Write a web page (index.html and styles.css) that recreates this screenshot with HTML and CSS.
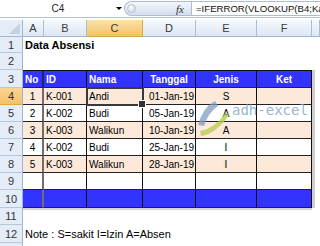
FILE: index.html
```html
<!DOCTYPE html>
<html>
<head>
<meta charset="utf-8">
<link rel="stylesheet" href="styles.css">
</head>
<body>
<div class="app">
  <div class="fbar">
    <div class="namebox"><span class="ref">C4</span><span class="dd"></span></div>
    <div class="pill"><span class="knob"></span><span class="fx">fx</span></div>
    <div class="formula">=IFERROR(VLOOKUP(B4;Ka</div>
  </div>
  <div class="sheet">
    <div class="row hdr">
      <div class="corner"><span class="tri"></span></div>
      <div class="ch">A</div><div class="ch">B</div><div class="ch on">C</div><div class="ch">D</div><div class="ch">E</div><div class="ch">F</div><div class="ch"></div>
    </div>
    <div class="row h16"><div class="rh">1</div><div class="c span title">Data Absensi</div></div>
    <div class="row"><div class="rh">2</div><div class="c span"></div></div>
    <div class="row h18 head">
      <div class="rh">3</div>
      <div class="t a">No</div><div class="t">ID</div><div class="t">Nama</div><div class="t ctr">Tanggal</div><div class="t ctr">Jenis</div><div class="t ctr last">Ket</div><div class="sh"></div>
    </div>
    <div class="row peach">
      <div class="rh on">4</div>
      <div class="t a ctr">1</div><div class="t">K-001</div><div class="t sel">Andi</div><div class="t rt">01-Jan-19</div><div class="t ctr">S</div><div class="t last"></div><div class="sh"></div>
    </div>
    <div class="row">
      <div class="rh">5</div>
      <div class="t a ctr">2</div><div class="t">K-002</div><div class="t">Budi</div><div class="t rt">05-Jan-19</div><div class="t ctr">A</div><div class="t last"></div><div class="sh"></div>
    </div>
    <div class="row peach">
      <div class="rh">6</div>
      <div class="t a ctr">3</div><div class="t">K-003</div><div class="t">Walikun</div><div class="t rt">10-Jan-19</div><div class="t ctr">A</div><div class="t last"></div><div class="sh"></div>
    </div>
    <div class="row">
      <div class="rh">7</div>
      <div class="t a ctr">4</div><div class="t">K-002</div><div class="t">Budi</div><div class="t rt">25-Jan-19</div><div class="t ctr">I</div><div class="t last"></div><div class="sh"></div>
    </div>
    <div class="row peach">
      <div class="rh">8</div>
      <div class="t a ctr">5</div><div class="t">K-003</div><div class="t">Walikun</div><div class="t rt">28-Jan-19</div><div class="t ctr">I</div><div class="t last"></div><div class="sh"></div>
    </div>
    <div class="row">
      <div class="rh">9</div>
      <div class="t a"></div><div class="t"></div><div class="t"></div><div class="t"></div><div class="t"></div><div class="t last"></div><div class="sh"></div>
    </div>
    <div class="row h18 foot">
      <div class="rh">10</div>
      <div class="t a"></div><div class="t"></div><div class="t"></div><div class="t"></div><div class="t"></div><div class="t last"></div><div class="sh"></div>
    </div>
    <div class="row"><div class="rh">11</div><div class="c span"></div></div>
    <div class="row h18"><div class="rh">12</div><div class="c span note">Note : S=sakit I=Izin A=Absen</div></div>
    <div class="row"><div class="rh"></div><div class="c span"></div></div>
  </div>
  <div class="wm">
    <svg class="logo" width="40" height="40" viewBox="0 0 40 40">
      <path d="M19 2 Q7 8 2 26 L8 27 Q12 14 22 7 Z" fill="#7f9cc0" opacity="0.75"/>
      <path d="M5 37 Q20 35 34 15 L29 14 Q20 29 4 32 Z" fill="#b3c948" opacity="0.75"/>
    </svg>
    <span class="wmtext">adh-excel</span>
  </div>
</div>
</body>
</html>
```
FILE: styles.css
```css
* { box-sizing: border-box; }
html, body { margin: 0; padding: 0; background: #fff; }
.app { position: relative; width: 320px; height: 246px; overflow: hidden; font-family: "Liberation Sans", Arial, sans-serif; color: #000; }

.fbar { display: flex; height: 18px; border-bottom: 1px solid #b4c6dc; margin-bottom: 2px; font-size: 10px; }
.namebox { width: 124px; display: flex; align-items: center; }
.ref { width: 116px; text-align: center; color: #222; }
.dd { width: 0; height: 0; border-left: 3px solid transparent; border-right: 3px solid transparent; border-top: 3px solid #000; }
.pill { width: 67px; margin-top: 1px; height: 15px; border: 1px solid #a9bdd6; border-right: 0; border-radius: 8px 0 0 8px; background: linear-gradient(#f4f7fb, #d3deec); display: flex; align-items: center; justify-content: space-between; padding: 0 7px 0 2px; }
.knob { width: 9px; height: 9px; border-radius: 50%; background: radial-gradient(circle at 40% 35%, #ffffff, #c2cfdf); border: 1px solid #b3c2d6; }
.fx { font-family: "Liberation Serif", serif; font-style: italic; font-size: 11px; color: #333; }
.formula { flex: 1; margin-top: 1px; height: 15px; border: 1px solid #a9bdd6; border-right: 0; padding-left: 4px; white-space: nowrap; overflow: hidden; line-height: 13px; font-size: 9.6px; color: #111; }

.sheet { display: flex; flex-direction: column; }
.row { display: grid; grid-template-columns: 23px 21px 43px 56px 53px 61px 55px 1fr; height: 17px; font-size: 10px; }
.row.h16 { height: 16px; }
.row.h18 { height: 18px; }

.corner { background: #e4ecf7; border-right: 1px solid #9eb6ce; border-bottom: 1px solid #9eb6ce; display: flex; justify-content: flex-end; align-items: flex-end; padding: 0 2px 2px 0; }
.tri { width: 11px; height: 11px; background: #c3d1e2; clip-path: polygon(100% 0, 100% 100%, 0 100%); }
.ch { background: linear-gradient(#f6f9fd, #dce6f3); border-right: 1px solid #a9bdd4; border-bottom: 1px solid #9eb6ce; text-align: center; line-height: 16px; font-size: 11px; color: #3a3a3a; }
.ch.on { background: linear-gradient(#fbe0ab, #f3c365); border-color: #e1a84a; }

.rh { background: #e4ecf7; border-right: 1px solid #9eb6ce; border-bottom: 1px solid #b5c7dc; display: flex; align-items: center; justify-content: center; font-size: 11px; color: #333; }
.rh.on { background: linear-gradient(#f9d494, #f5c16b); border-bottom-color: #e1a84a; }

.c { display: flex; align-items: center; padding-left: 2px; white-space: nowrap; }
.span { grid-column: 2 / -1; }
.title { font-weight: bold; font-size: 11px; }
.note { font-size: 11px; }

.t { display: flex; align-items: center; padding: 0 2px; border-right: 1px solid #111; border-bottom: 1px solid #222; white-space: nowrap; }
.t.a { border-right: 2px solid #6e6e6e; }
.t.ctr { justify-content: center; }
.t.rt { justify-content: flex-end; padding-right: 1px; }
.sh { border-left: 3px solid #cfcfcf; }
.peach .t { background: #fde9d9; }
.head .t { background: #3333ff; color: #fff; font-weight: bold; border-top: 1px solid #111; border-bottom-color: #1a1a80; }
.head .t.a { border-right-color: #22226e; }
.foot .t { background: #3333ff; box-shadow: 0 2px 0 #d4d4d4; }
.t.sel { position: relative; outline: 2px solid #3a3a3a; outline-offset: -1px; }
.t.sel::after { content: ""; position: absolute; right: -4px; bottom: -4px; width: 6px; height: 6px; background: #333; border: 1px solid #fff; }

.wm { position: absolute; left: 196px; top: 99px; display: flex; align-items: flex-start; }
.logo { display: block; }
.wmtext { margin-top: 3px; margin-left: -4px; font-family: "DejaVu Sans Mono", monospace; font-size: 14px; color: rgba(125, 158, 198, 0.8); }
```
